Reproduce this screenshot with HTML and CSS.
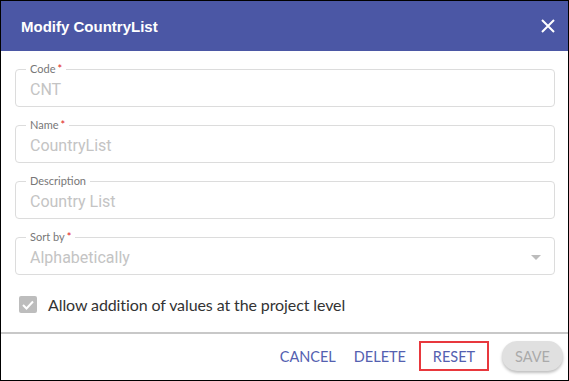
FILE: index.html
```html
<!DOCTYPE html>
<html lang="en">
<head>
    <meta charset="UTF-8">
    <title>Modify CountryList</title>
    <link rel="stylesheet" href="styles.css">
</head>
<body>
    <div class="dialog">
        <div class="header">
            <h2 class="title">Modify CountryList</h2>
            <button class="close" aria-label="Close">
                <svg width="14" height="14" viewBox="0 0 14 14">
                    <path d="M1 1L13 13M13 1L1 13" stroke="#fff" stroke-width="2" fill="none"/>
                </svg>
            </button>
        </div>

        <div class="content">
            <div class="field">
                <span class="label">Code<span class="req">*</span></span>
                <span class="value">CNT</span>
            </div>
            <div class="field">
                <span class="label">Name<span class="req">*</span></span>
                <span class="value">CountryList</span>
            </div>
            <div class="field">
                <span class="label">Description</span>
                <span class="value">Country List</span>
            </div>
            <div class="field">
                <span class="label">Sort by<span class="req">*</span></span>
                <span class="value">Alphabetically</span>
                <span class="arrow"></span>
            </div>

            <label class="check">
                <span class="box">
                    <svg width="12" height="10" viewBox="0 0 12 10">
                        <path d="M1 5L4.5 8.5L11 1.5" stroke="#fff" stroke-width="2" fill="none"/>
                    </svg>
                </span>
                Allow addition of values at the project level
            </label>
        </div>

        <div class="footer">
            <button class="action">CANCEL</button>
            <button class="action">DELETE</button>
            <button class="action reset">RESET</button>
            <button class="action save">SAVE</button>
        </div>
    </div>
</body>
</html>
```

FILE: styles.css
```css
* {
    box-sizing: border-box;
}
body {
    margin: 0;
    background-color: #ffffff;
    font-family: 'Lato', 'Liberation Sans', sans-serif;
}
.dialog {
    width: 569px;
    height: 381px;
    border: 1px solid #000;
    display: flex;
    flex-direction: column;
    background: #fff;
}
.header {
    height: 50px;
    flex-shrink: 0;
    background-color: #4b57a5;
    display: flex;
    align-items: center;
    justify-content: space-between;
    padding: 0 13px 0 20px;
}
.title {
    margin: 0;
    color: #fff;
    font-family: 'Liberation Sans', Arial, sans-serif;
    font-size: 15px;
    font-weight: bold;
}
.close {
    background: none;
    border: none;
    padding: 0;
    width: 14px;
    height: 14px;
    display: flex;
    cursor: pointer;
}
.content {
    flex: 1;
    padding: 18px 13px 0 14px;
    display: flex;
    flex-direction: column;
    gap: 18px;
}
.field {
    position: relative;
    height: 38px;
    border: 1px solid #dcdcdc;
    border-radius: 4px;
    display: flex;
    align-items: center;
    padding: 0 14px;
}
.label {
    position: absolute;
    top: -8px;
    left: 10px;
    padding: 0 4px;
    background: #fff;
    color: #777;
    font-size: 11px;
    line-height: 14px;
}
.req {
    color: #e02020;
    margin-left: 2px;
}
.value {
    padding-top: 2px;
    font-family: 'Roboto', 'Liberation Sans', sans-serif;
    font-size: 16px;
    color: #c4c4c4;
}
.arrow {
    position: absolute;
    right: 13px;
    top: 17px;
    border-left: 5px solid transparent;
    border-right: 5px solid transparent;
    border-top: 5px solid #bcbcbc;
}
.check {
    display: flex;
    align-items: center;
    gap: 11px;
    margin-top: 2px;
    padding-left: 4px;
    color: #333;
    font-size: 16px;
    letter-spacing: -0.1px;
}
.box {
    width: 18px;
    height: 17px;
    border-radius: 2px;
    background: #bdbdbd;
    display: flex;
    align-items: center;
    justify-content: center;
}
.footer {
    height: 48px;
    flex-shrink: 0;
    border-top: 2px solid #c8c8c8;
    display: flex;
    justify-content: flex-end;
    align-items: center;
    padding: 0 5px 2px 0;
}
.action {
    height: 30px;
    background: none;
    border: none;
    padding: 0 9px;
    font-family: 'Lato', sans-serif;
    font-size: 14.5px;
    color: #5460b0;
    cursor: pointer;
}
.reset {
    margin-left: 4px;
    padding: 0;
    border: 2px solid #e8383d;
    width: 70px;
}
.save {
    margin-left: 13px;
    padding: 0;
    width: 61px;
    border-radius: 15px;
    background: #e0e0e0;
    color: #aaa;
    box-shadow: 0 2px 3px rgba(0, 0, 0, 0.25);
}
```
